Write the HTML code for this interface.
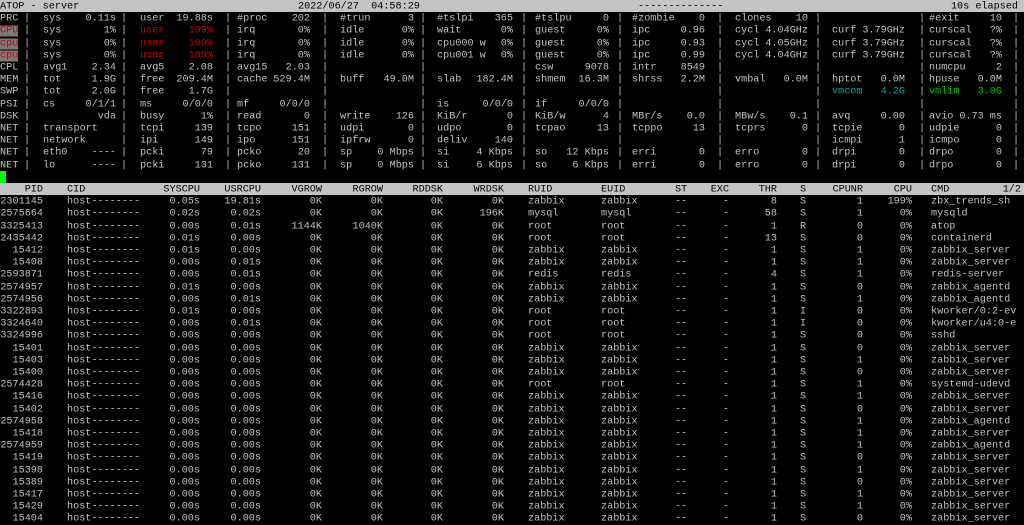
<!DOCTYPE html>
<html><head><meta charset="utf-8"><style>
*{margin:0;padding:0;box-sizing:border-box}
html,body{width:1024px;height:525px;background:#000;overflow:hidden}
body{position:relative;font-family:"Liberation Mono","DejaVu Sans Mono",monospace;font-size:10.17px;color:#c0c0c0;line-height:12.2px}
.c{position:absolute;white-space:pre;line-height:12.2px;transform:translateY(1.5px)}
.L{text-align:left}.R{text-align:right}
.bar{position:absolute;left:0;width:1024px;height:12.2px;background:#c4c4c4}
.k{color:#000}
.red{color:#d00000}
.cy{color:#00a8a8}
.gr{color:#00c000}
.cl{background:#7a7a7a;color:#d00000}
</style></head><body>
<div class="bar" style="top:0"></div>
<div class="c k" style="top:0;left:0">ATOP - server</div>
<div class="c k" style="top:0;left:298px">2022/06/27  04:58:29</div>
<div class="c k" style="top:0;left:638px">--------------</div>
<div class="c k R" style="top:0;right:6px">10s elapsed</div>

<div class="c L" style="top:12.2px;left:0">PRC
<span class="cl">CPU</span>
<span class="cl">cpu</span>
<span class="cl">cpu</span>
CPL
MEM
SWP
PSI
DSK
NET
NET
NET
NET</div>

<div class="c" style="top:12.2px;left:24px">|
|
|
|
|
|
|
|
|
|
|
|
|</div>
<div class="c" style="top:12.2px;left:121px">|
|
|
|
|
|
|
|
|
|
|
|
|</div>
<div class="c" style="top:12.2px;left:225px">|
|
|
|
|
|
|
|
|
|
|
|
|</div>
<div class="c" style="top:12.2px;left:322px">|
|
|
|
|
|
|
|
|
|
|
|
|</div>
<div class="c" style="top:12.2px;left:420px">|
|
|
|
|
|
|
|
|
|
|
|
|</div>
<div class="c" style="top:12.2px;left:521px">|
|
|
|
|
|
|
|
|
|
|
|
|</div>
<div class="c" style="top:12.2px;left:617px">|
|
|
|
|
|
|
|
|
|
|
|
|</div>
<div class="c" style="top:12.2px;left:717px">|
|
|
|
|
|
|
|
|
|
|
|
|</div>
<div class="c" style="top:12.2px;left:815px">|
|
|
|
|
|
|
|
|
|
|
|
|</div>
<div class="c" style="top:12.2px;left:919px">|
|
|
|
|
|
|
|
|
|
|
|
|</div>
<div class="c" style="top:12.2px;left:1013px">|
|
|
|
|
|
|
|
|
|
|
|
|</div>

<div class="c L" style="top:12.2px;left:43px">sys
sys
sys
sys
avg1
tot
tot
cs

transport
network
eth0
lo</div>
<div class="c R" style="top:12.2px;right:908px">0.11s
1%
0%
0%
2.34
1.9G
2.0G
0/1/1
vda


----
----</div>
<div class="c L" style="top:12.2px;left:140px">user
<span class="red">user</span>
<span class="red">user</span>
<span class="red">user</span>
avg5
free
free
ms
busy
tcpi
ipi
pcki
pcki</div>
<div class="c R" style="top:12.2px;right:811px">19.88s
<span class="red">199%</span>
<span class="red">100%</span>
<span class="red">100%</span>
2.08
209.4M
1.7G
0/0/0
1%
139
149
79
131</div>
<div class="c L" style="top:12.2px;left:237px">#proc
irq
irq
irq
avg15
cache

mf
read
tcpo
ipo
pcko
pcko</div>
<div class="c R" style="top:12.2px;right:714px">202
0%
0%
0%
2.03
529.4M

0/0/0
0
151
151
20
131</div>
<div class="c L" style="top:12.2px;left:340px">#trun
idle
idle
idle

buff


write
udpi
ipfrw
sp
sp</div>
<div class="c R" style="top:12.2px;right:610px">3
0%
0%
0%

49.0M


126
0
0
0 Mbps
0 Mbps</div>
<div class="c L" style="top:12.2px;left:437px">#tslpi
wait
cpu000 w
cpu001 w

slab

is
KiB/r
udpo
deliv
si
si</div>
<div class="c R" style="top:12.2px;right:511px">365
0%
0%
0%

182.4M

0/0/0
0
0
140
4 Kbps
6 Kbps</div>
<div class="c L" style="top:12.2px;left:535px">#tslpu
guest
guest
guest
csw
shmem

if
KiB/w
tcpao

so
so</div>
<div class="c R" style="top:12.2px;right:415px">0
0%
0%
0%
9078
16.3M

0/0/0
4
13

12 Kbps
6 Kbps</div>
<div class="c L" style="top:12.2px;left:632px">#zombie
ipc
ipc
ipc
intr
shrss


MBr/s
tcppo

erri
erri</div>
<div class="c R" style="top:12.2px;right:319px">0
0.96
0.93
0.99
8549
2.2M


0.0
13

0
0</div>
<div class="c L" style="top:12.2px;left:735px">clones
cycl
cycl
cycl

vmbal


MBw/s
tcprs

erro
erro</div>
<div class="c R" style="top:12.2px;right:216px">10
4.04GHz
4.05GHz
4.04GHz

0.0M


0.1
0

0
0</div>
<div class="c L" style="top:12.2px;left:832px">
curf
curf
curf

hptot
<span class="cy">vmcom</span>

avq
tcpie
icmpi
drpi
drpi</div>
<div class="c R" style="top:12.2px;right:119px">
3.79GHz
3.79GHz
3.79GHz

0.0M
<span class="cy">4.2G</span>

0.00
0
1
0
0</div>
<div class="c L" style="top:12.2px;left:929px">#exit
curscal
curscal
curscal
numcpu
hpuse
<span class="gr">vmlim</span>

avio
udpie
icmpo
drpo
drpo</div>
<div class="c R" style="top:12.2px;right:22px">10
?%
?%
?%
2
0.0M
<span class="gr">3.0G</span>

0.73 ms
0
0
0
0</div>

<div style="position:absolute;left:0;top:171px;width:6px;height:12px;background:#00ff00"></div>

<div class="bar" style="top:183px"></div>

<div class="c R" style="top:183px;right:981px"><span class="k">    PID</span>
2301145
2575664
3325413
2435442
15412
15408
2593871
2574957
2574956
3322893
3324640
3324996
15401
15403
15400
2574428
15416
15402
2574958
15418
2574959
15419
15398
15389
15417
15429
15404</div>
<div class="c L" style="top:183px;left:67px"><span class="k">CID</span>
host--------
host--------
host--------
host--------
host--------
host--------
host--------
host--------
host--------
host--------
host--------
host--------
host--------
host--------
host--------
host--------
host--------
host--------
host--------
host--------
host--------
host--------
host--------
host--------
host--------
host--------
host--------</div>
<div class="c R" style="top:183px;right:824px"><span class="k">SYSCPU</span>
0.05s
0.02s
0.00s
0.01s
0.01s
0.00s
0.00s
0.01s
0.00s
0.01s
0.00s
0.00s
0.00s
0.00s
0.00s
0.00s
0.00s
0.00s
0.00s
0.00s
0.00s
0.00s
0.00s
0.00s
0.00s
0.00s
0.00s</div>
<div class="c R" style="top:183px;right:763px"><span class="k">USRCPU</span>
19.81s
0.02s
0.01s
0.00s
0.00s
0.01s
0.01s
0.00s
0.01s
0.00s
0.01s
0.00s
0.00s
0.00s
0.00s
0.00s
0.00s
0.00s
0.00s
0.00s
0.00s
0.00s
0.00s
0.00s
0.00s
0.00s
0.00s</div>
<div class="c R" style="top:183px;right:702px"><span class="k">VGROW</span>
0K
0K
1144K
0K
0K
0K
0K
0K
0K
0K
0K
0K
0K
0K
0K
0K
0K
0K
0K
0K
0K
0K
0K
0K
0K
0K
0K</div>
<div class="c R" style="top:183px;right:641px"><span class="k">RGROW</span>
0K
0K
1040K
0K
0K
0K
0K
0K
0K
0K
0K
0K
0K
0K
0K
0K
0K
0K
0K
0K
0K
0K
0K
0K
0K
0K
0K</div>
<div class="c R" style="top:183px;right:581px"><span class="k">RDDSK</span>
0K
0K
0K
0K
0K
0K
0K
0K
0K
0K
0K
0K
0K
0K
0K
0K
0K
0K
0K
0K
0K
0K
0K
0K
0K
0K
0K</div>
<div class="c R" style="top:183px;right:520px"><span class="k">WRDSK</span>
0K
196K
0K
0K
0K
0K
0K
0K
0K
0K
0K
0K
0K
0K
0K
0K
0K
0K
0K
0K
0K
0K
0K
0K
0K
0K
0K</div>
<div class="c L" style="top:183px;left:528px"><span class="k">RUID</span>
zabbix
mysql
root
root
zabbix
zabbix
redis
zabbix
zabbix
root
root
root
zabbix
zabbix
zabbix
root
zabbix
zabbix
zabbix
zabbix
zabbix
zabbix
zabbix
zabbix
zabbix
zabbix
zabbix</div>
<div class="c L" style="top:183px;left:601px"><span class="k">EUID</span>
zabbix
mysql
root
root
zabbix
zabbix
redis
zabbix
zabbix
root
root
root
zabbix
zabbix
zabbix
root
zabbix
zabbix
zabbix
zabbix
zabbix
zabbix
zabbix
zabbix
zabbix
zabbix
zabbix</div>
<div class="c L" style="top:183px;left:675px"><span class="k">ST</span>
--
--
--
--
--
--
--
--
--
--
--
--
--
--
--
--
--
--
--
--
--
--
--
--
--
--
--</div>
<div class="c R" style="top:183px;right:295px"><span class="k">EXC</span>
-
-
-
-
-
-
-
-
-
-
-
-
-
-
-
-
-
-
-
-
-
-
-
-
-
-
-</div>
<div class="c R" style="top:183px;right:247px"><span class="k">THR</span>
8
58
1
13
1
1
4
1
1
1
1
1
1
1
1
1
1
1
1
1
1
1
1
1
1
1
1</div>
<div class="c L" style="top:183px;left:800px"><span class="k">S</span>
S
S
R
S
S
S
S
S
S
I
I
S
S
S
S
S
S
S
S
S
S
S
S
S
S
S
S</div>
<div class="c R" style="top:183px;right:161px"><span class="k">CPUNR</span>
1
1
0
0
1
1
1
0
1
0
0
0
0
1
0
1
1
0
1
1
1
0
1
0
1
1
0</div>
<div class="c R" style="top:183px;right:112px"><span class="k">CPU</span>
199%
0%
0%
0%
0%
0%
0%
0%
0%
0%
0%
0%
0%
0%
0%
0%
0%
0%
0%
0%
0%
0%
0%
0%
0%
0%
0%</div>
<div class="c L" style="top:183px;left:931px"><span class="k">CMD</span>
zbx_trends_sh
mysqld
atop
containerd
zabbix_server
zabbix_server
redis-server
zabbix_agentd
zabbix_agentd
kworker/0:2-ev
kworker/u4:0-e
sshd
zabbix_server
zabbix_server
zabbix_server
systemd-udevd
zabbix_server
zabbix_server
zabbix_agentd
zabbix_server
zabbix_agentd
zabbix_server
zabbix_server
zabbix_server
zabbix_server
zabbix_server
zabbix_server</div>
<div class="c R k" style="top:183px;right:3px">1/2</div>
</body></html>
